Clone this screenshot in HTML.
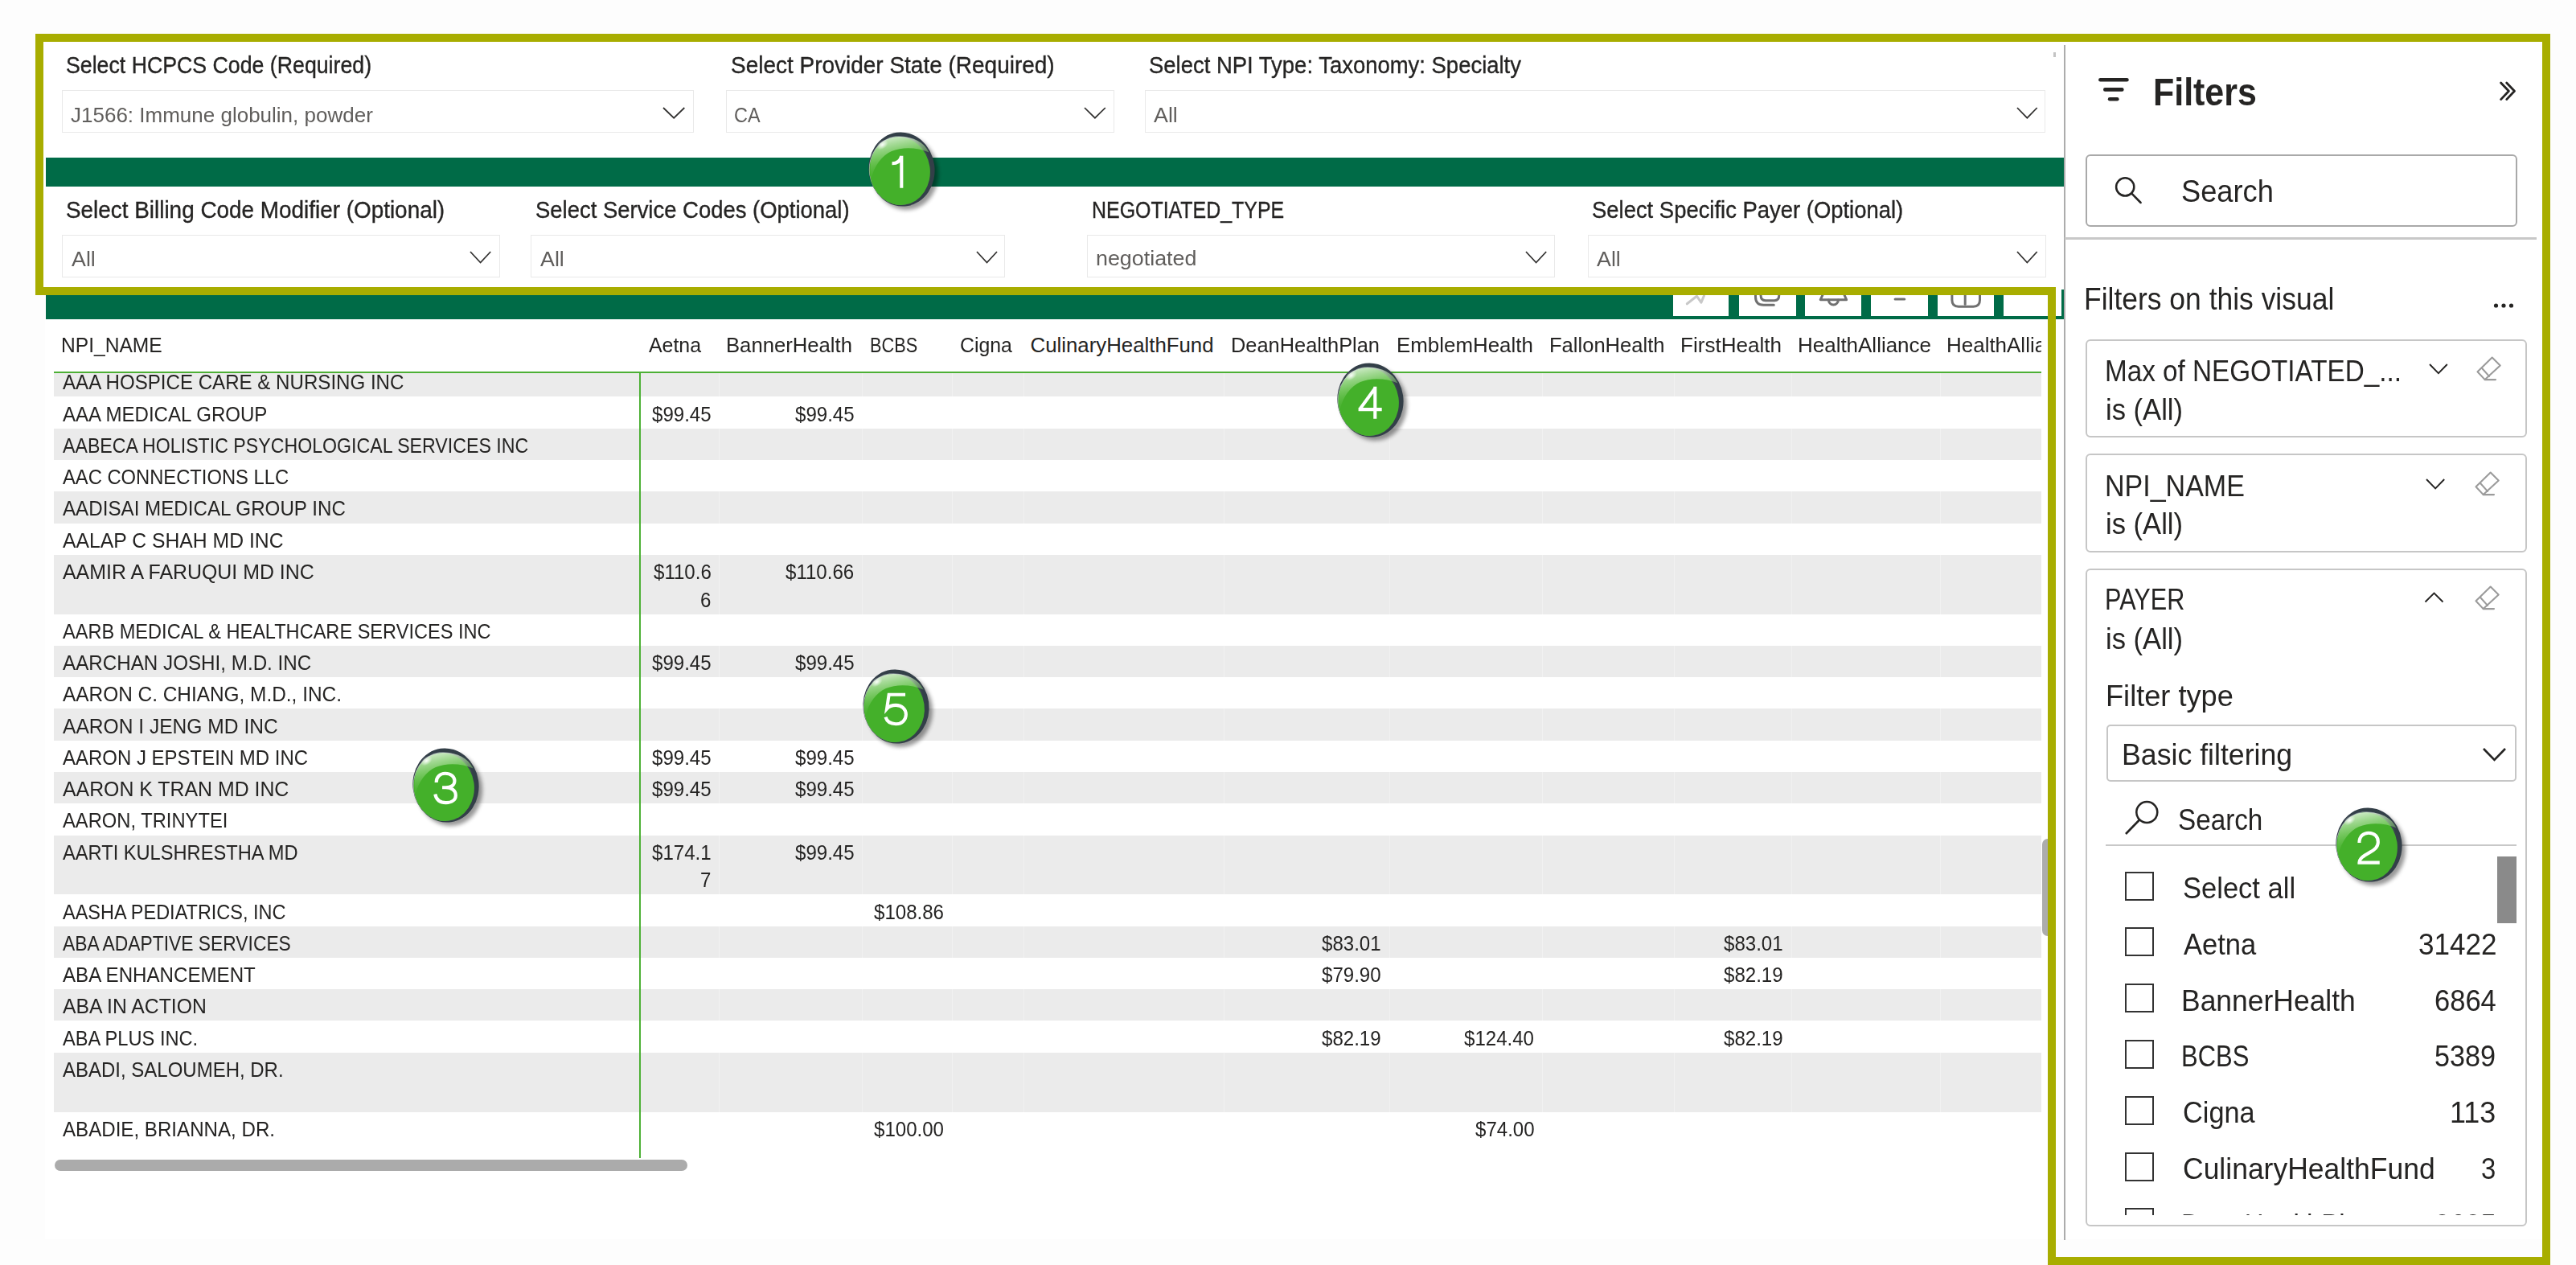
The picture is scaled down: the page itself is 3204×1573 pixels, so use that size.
<!DOCTYPE html>
<html><head><meta charset="utf-8"><style>
html,body{margin:0;padding:0;}
body{width:3204px;height:1573px;overflow:hidden;background:#fdfdfd;font-family:"Liberation Sans", sans-serif;}
#r{position:relative;width:3204px;height:1573px;overflow:hidden;color:#252423;}
#r div,#r svg{position:absolute;white-space:nowrap;}
</style></head><body><div id="r">
<div style="left:56.00px;top:52.00px;width:3106.00px;height:1489.00px;background:#fff"></div>
<div style="left:54.00px;top:52.00px;width:2.00px;height:315.00px;background:#fff"></div>
<div style="left:57.00px;top:196.20px;width:2509.50px;height:35.40px;background:#006b47"></div>
<div style="left:57.00px;top:360.00px;width:2509.50px;height:36.50px;background:#006b47"></div>
<div style="left:2081.00px;top:360.00px;width:69.30px;height:32.70px;background:#fff"></div>
<div style="left:2163.00px;top:360.00px;width:70.50px;height:32.70px;background:#fff"></div>
<div style="left:2245.10px;top:360.00px;width:70.40px;height:32.70px;background:#fff"></div>
<div style="left:2327.00px;top:360.00px;width:70.80px;height:32.70px;background:#fff"></div>
<div style="left:2410.10px;top:360.00px;width:69.90px;height:32.70px;background:#fff"></div>
<div style="left:2492.40px;top:360.00px;width:71.30px;height:32.70px;background:#fff"></div>
<svg style="left:2080px;top:350px" width="490" height="45"><g fill="none" stroke-linecap="round" stroke-linejoin="round"><polyline points="18.3,27.8 30.4,18.2 35.9,26.2 39.5,17.7" stroke="#c8c8c8" stroke-width="3"/><path d="M103.5,10 L103.5,19 Q103.5,29.3 113.5,29.3 L126.3,29.3" stroke="#707070" stroke-width="3"/><path d="M110,10 L110,17 Q110,23.7 116,23.7 L127,23.7 Q132.8,23.7 132.8,17 L132.8,10" stroke="#707070" stroke-width="3"/><path d="M190,10 L184.3,22.7 L216.6,22.7 L211,10" stroke="#707070" stroke-width="3"/><path d="M194.4,23 A6,6 0 0 0 206.4,23" stroke="#707070" stroke-width="3"/><line x1="277.2" y1="22" x2="288.7" y2="22" stroke="#707070" stroke-width="3.2"/><path d="M347.9,10 L347.9,23 Q347.9,31.2 356,31.2 L374.5,31.2 Q382.5,31.2 382.5,23 L382.5,10" stroke="#707070" stroke-width="3"/><line x1="364.2" y1="10" x2="364.2" y2="28.3" stroke="#707070" stroke-width="3"/></g></svg>
<div style="left:82.49px;top:66.00px;font-size:29.4px;line-height:29.4px;transform:scaleX(0.9088);transform-origin:0 0;-webkit-text-stroke:0.35px #252423;">Select HCPCS Code (Required)</div>
<div style="left:76.60px;top:112.30px;width:786.00px;height:53.10px;border:1.6px solid #e9e9e9;box-sizing:border-box;background:#fff"></div>
<div style="left:87.70px;top:131.00px;font-size:25.8px;line-height:25.8px;color:#605e5c;transform:scaleX(1.0079);transform-origin:0 0;">J1566: Immune globulin, powder</div>
<svg style="left:822.00px;top:131.00px" width="32.30" height="18.70"><polyline points="3,3 16.15,15.70 29.30,3" fill="none" stroke="#323130" stroke-width="1.75"/></svg>
<div style="left:908.65px;top:66.00px;font-size:29.4px;line-height:29.4px;transform:scaleX(0.9517);transform-origin:0 0;-webkit-text-stroke:0.35px #252423;">Select Provider State (Required)</div>
<div style="left:902.80px;top:112.30px;width:482.90px;height:52.90px;border:1.6px solid #e9e9e9;box-sizing:border-box;background:#fff"></div>
<div style="left:913.29px;top:131.00px;font-size:25.8px;line-height:25.8px;color:#605e5c;transform:scaleX(0.9094);transform-origin:0 0;">CA</div>
<svg style="left:1346.00px;top:131.00px" width="31.80" height="18.70"><polyline points="3,3 15.90,15.70 28.80,3" fill="none" stroke="#323130" stroke-width="1.75"/></svg>
<div style="left:1429.17px;top:66.00px;font-size:29.4px;line-height:29.4px;transform:scaleX(0.9343);transform-origin:0 0;-webkit-text-stroke:0.35px #252423;">Select NPI Type: Taxonomy: Specialty</div>
<div style="left:1424.00px;top:112.30px;width:1120.30px;height:53.10px;border:1.6px solid #e9e9e9;box-sizing:border-box;background:#fff"></div>
<div style="left:1435.40px;top:131.00px;font-size:25.8px;line-height:25.8px;color:#605e5c;transform:scaleX(1.0394);transform-origin:0 0;">All</div>
<svg style="left:2506.30px;top:131.00px" width="30.70" height="18.70"><polyline points="3,3 15.35,15.70 27.70,3" fill="none" stroke="#323130" stroke-width="1.75"/></svg>
<div style="left:81.75px;top:246.00px;font-size:29.4px;line-height:29.4px;transform:scaleX(0.9487);transform-origin:0 0;-webkit-text-stroke:0.35px #252423;">Select Billing Code Modifier (Optional)</div>
<div style="left:76.50px;top:292.20px;width:545.80px;height:52.80px;border:1.6px solid #e9e9e9;box-sizing:border-box;background:#fff"></div>
<div style="left:88.50px;top:310.00px;font-size:25.8px;line-height:25.8px;color:#605e5c;transform:scaleX(1.0394);transform-origin:0 0;">All</div>
<svg style="left:582.40px;top:309.50px" width="31.20" height="19.50"><polyline points="3,3 15.60,16.50 28.20,3" fill="none" stroke="#323130" stroke-width="1.75"/></svg>
<div style="left:666.07px;top:246.00px;font-size:29.4px;line-height:29.4px;transform:scaleX(0.9340);transform-origin:0 0;-webkit-text-stroke:0.35px #252423;">Select Service Codes (Optional)</div>
<div style="left:660.00px;top:292.20px;width:590.00px;height:52.80px;border:1.6px solid #e9e9e9;box-sizing:border-box;background:#fff"></div>
<div style="left:671.50px;top:310.00px;font-size:25.8px;line-height:25.8px;color:#605e5c;transform:scaleX(1.0394);transform-origin:0 0;">All</div>
<svg style="left:1211.50px;top:309.50px" width="31.00" height="19.50"><polyline points="3,3 15.50,16.50 28.00,3" fill="none" stroke="#323130" stroke-width="1.75"/></svg>
<div style="left:1357.50px;top:246.00px;font-size:29.4px;line-height:29.4px;transform:scaleX(0.8483);transform-origin:0 0;-webkit-text-stroke:0.35px #252423;">NEGOTIATED_TYPE</div>
<div style="left:1351.60px;top:292.20px;width:582.40px;height:53.20px;border:1.6px solid #e9e9e9;box-sizing:border-box;background:#fff"></div>
<div style="left:1362.86px;top:309.00px;font-size:25.8px;line-height:25.8px;color:#605e5c;transform:scaleX(1.0411);transform-origin:0 0;">negotiated</div>
<svg style="left:1894.80px;top:309.50px" width="31.20" height="19.50"><polyline points="3,3 15.60,16.50 28.20,3" fill="none" stroke="#323130" stroke-width="1.75"/></svg>
<div style="left:1979.87px;top:246.00px;font-size:29.4px;line-height:29.4px;transform:scaleX(0.9332);transform-origin:0 0;-webkit-text-stroke:0.35px #252423;">Select Specific Payer (Optional)</div>
<div style="left:1974.50px;top:292.40px;width:570.90px;height:52.60px;border:1.6px solid #e9e9e9;box-sizing:border-box;background:#fff"></div>
<div style="left:1986.30px;top:310.00px;font-size:25.8px;line-height:25.8px;color:#605e5c;transform:scaleX(1.0394);transform-origin:0 0;">All</div>
<svg style="left:2506.30px;top:309.50px" width="30.70" height="19.50"><polyline points="3,3 15.35,16.50 27.70,3" fill="none" stroke="#323130" stroke-width="1.75"/></svg>
<div style="left:67.20px;top:400px;width:2471.80px;height:62px;overflow:hidden">
<div style="left:8.59px;top:17.00px;font-size:25.8px;line-height:25.8px;transform:scaleX(0.9532);transform-origin:0 0;">NPI_NAME</div>
<div style="left:739.40px;top:17.00px;font-size:25.8px;line-height:25.8px;transform:scaleX(0.9652);transform-origin:0 0;">Aetna</div>
<div style="left:835.81px;top:17.00px;font-size:25.8px;line-height:25.8px;transform:scaleX(0.9948);transform-origin:0 0;">BannerHealth</div>
<div style="left:1014.82px;top:17.00px;font-size:25.8px;line-height:25.8px;transform:scaleX(0.8421);transform-origin:0 0;">BCBS</div>
<div style="left:1126.64px;top:17.00px;font-size:25.8px;line-height:25.8px;transform:scaleX(0.9619);transform-origin:0 0;">Cigna</div>
<div style="left:1214.40px;top:17.00px;font-size:25.8px;line-height:25.8px;">CulinaryHealthFund</div>
<div style="left:1463.43px;top:17.00px;font-size:25.8px;line-height:25.8px;transform:scaleX(0.9847);transform-origin:0 0;">DeanHealthPlan</div>
<div style="left:1669.59px;top:17.00px;font-size:25.8px;line-height:25.8px;transform:scaleX(1.0040);transform-origin:0 0;">EmblemHealth</div>
<div style="left:1860.12px;top:17.00px;font-size:25.8px;line-height:25.8px;transform:scaleX(0.9909);transform-origin:0 0;">FallonHealth</div>
<div style="left:2023.18px;top:17.00px;font-size:25.8px;line-height:25.8px;transform:scaleX(1.0102);transform-origin:0 0;">FirstHealth</div>
<div style="left:2168.79px;top:17.00px;font-size:25.8px;line-height:25.8px;transform:scaleX(1.0064);transform-origin:0 0;">HealthAlliance</div>
<div style="left:2353.79px;top:17.00px;font-size:25.8px;line-height:25.8px;transform:scaleX(1.0064);transform-origin:0 0;">HealthAlliance</div>
</div>
<div style="left:67.20px;top:463.60px;width:2471.80px;height:976.40px;overflow:hidden">
<div style="left:0.00px;top:-9.36px;width:2471.80px;height:39.26px;background:#ebebeb"></div>
<div style="left:827.30px;top:-9.36px;width:1.00px;height:39.26px;background:#f1f1f1"></div>
<div style="left:1004.80px;top:-9.36px;width:1.00px;height:39.26px;background:#f1f1f1"></div>
<div style="left:1116.80px;top:-9.36px;width:1.00px;height:39.26px;background:#f1f1f1"></div>
<div style="left:1206.30px;top:-9.36px;width:1.00px;height:39.26px;background:#f1f1f1"></div>
<div style="left:1454.40px;top:-9.36px;width:1.00px;height:39.26px;background:#f1f1f1"></div>
<div style="left:1660.60px;top:-9.36px;width:1.00px;height:39.26px;background:#f1f1f1"></div>
<div style="left:1850.80px;top:-9.36px;width:1.00px;height:39.26px;background:#f1f1f1"></div>
<div style="left:2015.00px;top:-9.36px;width:1.00px;height:39.26px;background:#f1f1f1"></div>
<div style="left:2160.40px;top:-9.36px;width:1.00px;height:39.26px;background:#f1f1f1"></div>
<div style="left:2345.60px;top:-9.36px;width:1.00px;height:39.26px;background:#f1f1f1"></div>
<div style="left:10.40px;top:-2.00px;font-size:26.3px;line-height:26.3px;transform:scaleX(0.9162);transform-origin:0 0;">AAA HOSPICE CARE &amp; NURSING INC</div>
<div style="left:10.40px;top:38.00px;font-size:26.3px;line-height:26.3px;transform:scaleX(0.9146);transform-origin:0 0;">AAA MEDICAL GROUP</div>
<div style="left:743.98px;top:38.00px;font-size:26.3px;line-height:26.3px;transform:scaleX(0.9150);transform-origin:0 0;">$99.45</div>
<div style="left:921.48px;top:38.00px;font-size:26.3px;line-height:26.3px;transform:scaleX(0.9150);transform-origin:0 0;">$99.45</div>
<div style="left:0.00px;top:69.16px;width:2471.80px;height:39.26px;background:#ebebeb"></div>
<div style="left:827.30px;top:69.16px;width:1.00px;height:39.26px;background:#f1f1f1"></div>
<div style="left:1004.80px;top:69.16px;width:1.00px;height:39.26px;background:#f1f1f1"></div>
<div style="left:1116.80px;top:69.16px;width:1.00px;height:39.26px;background:#f1f1f1"></div>
<div style="left:1206.30px;top:69.16px;width:1.00px;height:39.26px;background:#f1f1f1"></div>
<div style="left:1454.40px;top:69.16px;width:1.00px;height:39.26px;background:#f1f1f1"></div>
<div style="left:1660.60px;top:69.16px;width:1.00px;height:39.26px;background:#f1f1f1"></div>
<div style="left:1850.80px;top:69.16px;width:1.00px;height:39.26px;background:#f1f1f1"></div>
<div style="left:2015.00px;top:69.16px;width:1.00px;height:39.26px;background:#f1f1f1"></div>
<div style="left:2160.40px;top:69.16px;width:1.00px;height:39.26px;background:#f1f1f1"></div>
<div style="left:2345.60px;top:69.16px;width:1.00px;height:39.26px;background:#f1f1f1"></div>
<div style="left:10.40px;top:77.00px;font-size:26.3px;line-height:26.3px;transform:scaleX(0.8807);transform-origin:0 0;">AABECA HOLISTIC PSYCHOLOGICAL SERVICES INC</div>
<div style="left:10.40px;top:116.00px;font-size:26.3px;line-height:26.3px;transform:scaleX(0.9032);transform-origin:0 0;">AAC CONNECTIONS LLC</div>
<div style="left:0.00px;top:147.68px;width:2471.80px;height:39.26px;background:#ebebeb"></div>
<div style="left:827.30px;top:147.68px;width:1.00px;height:39.26px;background:#f1f1f1"></div>
<div style="left:1004.80px;top:147.68px;width:1.00px;height:39.26px;background:#f1f1f1"></div>
<div style="left:1116.80px;top:147.68px;width:1.00px;height:39.26px;background:#f1f1f1"></div>
<div style="left:1206.30px;top:147.68px;width:1.00px;height:39.26px;background:#f1f1f1"></div>
<div style="left:1454.40px;top:147.68px;width:1.00px;height:39.26px;background:#f1f1f1"></div>
<div style="left:1660.60px;top:147.68px;width:1.00px;height:39.26px;background:#f1f1f1"></div>
<div style="left:1850.80px;top:147.68px;width:1.00px;height:39.26px;background:#f1f1f1"></div>
<div style="left:2015.00px;top:147.68px;width:1.00px;height:39.26px;background:#f1f1f1"></div>
<div style="left:2160.40px;top:147.68px;width:1.00px;height:39.26px;background:#f1f1f1"></div>
<div style="left:2345.60px;top:147.68px;width:1.00px;height:39.26px;background:#f1f1f1"></div>
<div style="left:10.40px;top:155.00px;font-size:26.3px;line-height:26.3px;transform:scaleX(0.9191);transform-origin:0 0;">AADISAI MEDICAL GROUP INC</div>
<div style="left:10.40px;top:195.00px;font-size:26.3px;line-height:26.3px;transform:scaleX(0.9408);transform-origin:0 0;">AALAP C SHAH MD INC</div>
<div style="left:0.00px;top:226.20px;width:2471.80px;height:73.92px;background:#ebebeb"></div>
<div style="left:827.30px;top:226.20px;width:1.00px;height:73.92px;background:#f1f1f1"></div>
<div style="left:1004.80px;top:226.20px;width:1.00px;height:73.92px;background:#f1f1f1"></div>
<div style="left:1116.80px;top:226.20px;width:1.00px;height:73.92px;background:#f1f1f1"></div>
<div style="left:1206.30px;top:226.20px;width:1.00px;height:73.92px;background:#f1f1f1"></div>
<div style="left:1454.40px;top:226.20px;width:1.00px;height:73.92px;background:#f1f1f1"></div>
<div style="left:1660.60px;top:226.20px;width:1.00px;height:73.92px;background:#f1f1f1"></div>
<div style="left:1850.80px;top:226.20px;width:1.00px;height:73.92px;background:#f1f1f1"></div>
<div style="left:2015.00px;top:226.20px;width:1.00px;height:73.92px;background:#f1f1f1"></div>
<div style="left:2160.40px;top:226.20px;width:1.00px;height:73.92px;background:#f1f1f1"></div>
<div style="left:2345.60px;top:226.20px;width:1.00px;height:73.92px;background:#f1f1f1"></div>
<div style="left:10.40px;top:234.00px;font-size:26.3px;line-height:26.3px;transform:scaleX(0.9469);transform-origin:0 0;">AAMIR A FARUQUI MD INC</div>
<div style="left:745.76px;top:234.00px;font-size:26.3px;line-height:26.3px;transform:scaleX(0.9150);transform-origin:0 0;">$110.6</div>
<div style="left:804.19px;top:269.00px;font-size:26.3px;line-height:26.3px;transform:scaleX(0.9150);transform-origin:0 0;">6</div>
<div style="left:909.88px;top:234.00px;font-size:26.3px;line-height:26.3px;transform:scaleX(0.9150);transform-origin:0 0;">$110.66</div>
<div style="left:10.40px;top:308.00px;font-size:26.3px;line-height:26.3px;transform:scaleX(0.8961);transform-origin:0 0;">AARB MEDICAL &amp; HEALTHCARE SERVICES INC</div>
<div style="left:0.00px;top:339.38px;width:2471.80px;height:39.26px;background:#ebebeb"></div>
<div style="left:827.30px;top:339.38px;width:1.00px;height:39.26px;background:#f1f1f1"></div>
<div style="left:1004.80px;top:339.38px;width:1.00px;height:39.26px;background:#f1f1f1"></div>
<div style="left:1116.80px;top:339.38px;width:1.00px;height:39.26px;background:#f1f1f1"></div>
<div style="left:1206.30px;top:339.38px;width:1.00px;height:39.26px;background:#f1f1f1"></div>
<div style="left:1454.40px;top:339.38px;width:1.00px;height:39.26px;background:#f1f1f1"></div>
<div style="left:1660.60px;top:339.38px;width:1.00px;height:39.26px;background:#f1f1f1"></div>
<div style="left:1850.80px;top:339.38px;width:1.00px;height:39.26px;background:#f1f1f1"></div>
<div style="left:2015.00px;top:339.38px;width:1.00px;height:39.26px;background:#f1f1f1"></div>
<div style="left:2160.40px;top:339.38px;width:1.00px;height:39.26px;background:#f1f1f1"></div>
<div style="left:2345.60px;top:339.38px;width:1.00px;height:39.26px;background:#f1f1f1"></div>
<div style="left:10.40px;top:347.00px;font-size:26.3px;line-height:26.3px;transform:scaleX(0.9202);transform-origin:0 0;">AARCHAN JOSHI, M.D. INC</div>
<div style="left:743.98px;top:347.00px;font-size:26.3px;line-height:26.3px;transform:scaleX(0.9150);transform-origin:0 0;">$99.45</div>
<div style="left:921.48px;top:347.00px;font-size:26.3px;line-height:26.3px;transform:scaleX(0.9150);transform-origin:0 0;">$99.45</div>
<div style="left:10.40px;top:386.00px;font-size:26.3px;line-height:26.3px;transform:scaleX(0.9276);transform-origin:0 0;">AARON C. CHIANG, M.D., INC.</div>
<div style="left:0.00px;top:417.90px;width:2471.80px;height:39.26px;background:#ebebeb"></div>
<div style="left:827.30px;top:417.90px;width:1.00px;height:39.26px;background:#f1f1f1"></div>
<div style="left:1004.80px;top:417.90px;width:1.00px;height:39.26px;background:#f1f1f1"></div>
<div style="left:1116.80px;top:417.90px;width:1.00px;height:39.26px;background:#f1f1f1"></div>
<div style="left:1206.30px;top:417.90px;width:1.00px;height:39.26px;background:#f1f1f1"></div>
<div style="left:1454.40px;top:417.90px;width:1.00px;height:39.26px;background:#f1f1f1"></div>
<div style="left:1660.60px;top:417.90px;width:1.00px;height:39.26px;background:#f1f1f1"></div>
<div style="left:1850.80px;top:417.90px;width:1.00px;height:39.26px;background:#f1f1f1"></div>
<div style="left:2015.00px;top:417.90px;width:1.00px;height:39.26px;background:#f1f1f1"></div>
<div style="left:2160.40px;top:417.90px;width:1.00px;height:39.26px;background:#f1f1f1"></div>
<div style="left:2345.60px;top:417.90px;width:1.00px;height:39.26px;background:#f1f1f1"></div>
<div style="left:10.40px;top:426.00px;font-size:26.3px;line-height:26.3px;transform:scaleX(0.9349);transform-origin:0 0;">AARON I JENG MD INC</div>
<div style="left:10.40px;top:465.00px;font-size:26.3px;line-height:26.3px;transform:scaleX(0.9116);transform-origin:0 0;">AARON J EPSTEIN MD INC</div>
<div style="left:743.98px;top:465.00px;font-size:26.3px;line-height:26.3px;transform:scaleX(0.9150);transform-origin:0 0;">$99.45</div>
<div style="left:921.48px;top:465.00px;font-size:26.3px;line-height:26.3px;transform:scaleX(0.9150);transform-origin:0 0;">$99.45</div>
<div style="left:0.00px;top:496.42px;width:2471.80px;height:39.26px;background:#ebebeb"></div>
<div style="left:827.30px;top:496.42px;width:1.00px;height:39.26px;background:#f1f1f1"></div>
<div style="left:1004.80px;top:496.42px;width:1.00px;height:39.26px;background:#f1f1f1"></div>
<div style="left:1116.80px;top:496.42px;width:1.00px;height:39.26px;background:#f1f1f1"></div>
<div style="left:1206.30px;top:496.42px;width:1.00px;height:39.26px;background:#f1f1f1"></div>
<div style="left:1454.40px;top:496.42px;width:1.00px;height:39.26px;background:#f1f1f1"></div>
<div style="left:1660.60px;top:496.42px;width:1.00px;height:39.26px;background:#f1f1f1"></div>
<div style="left:1850.80px;top:496.42px;width:1.00px;height:39.26px;background:#f1f1f1"></div>
<div style="left:2015.00px;top:496.42px;width:1.00px;height:39.26px;background:#f1f1f1"></div>
<div style="left:2160.40px;top:496.42px;width:1.00px;height:39.26px;background:#f1f1f1"></div>
<div style="left:2345.60px;top:496.42px;width:1.00px;height:39.26px;background:#f1f1f1"></div>
<div style="left:10.40px;top:504.00px;font-size:26.3px;line-height:26.3px;transform:scaleX(0.9453);transform-origin:0 0;">AARON K TRAN MD INC</div>
<div style="left:743.98px;top:504.00px;font-size:26.3px;line-height:26.3px;transform:scaleX(0.9150);transform-origin:0 0;">$99.45</div>
<div style="left:921.48px;top:504.00px;font-size:26.3px;line-height:26.3px;transform:scaleX(0.9150);transform-origin:0 0;">$99.45</div>
<div style="left:10.40px;top:543.00px;font-size:26.3px;line-height:26.3px;transform:scaleX(0.9028);transform-origin:0 0;">AARON, TRINYTEI</div>
<div style="left:0.00px;top:574.94px;width:2471.80px;height:73.92px;background:#ebebeb"></div>
<div style="left:827.30px;top:574.94px;width:1.00px;height:73.92px;background:#f1f1f1"></div>
<div style="left:1004.80px;top:574.94px;width:1.00px;height:73.92px;background:#f1f1f1"></div>
<div style="left:1116.80px;top:574.94px;width:1.00px;height:73.92px;background:#f1f1f1"></div>
<div style="left:1206.30px;top:574.94px;width:1.00px;height:73.92px;background:#f1f1f1"></div>
<div style="left:1454.40px;top:574.94px;width:1.00px;height:73.92px;background:#f1f1f1"></div>
<div style="left:1660.60px;top:574.94px;width:1.00px;height:73.92px;background:#f1f1f1"></div>
<div style="left:1850.80px;top:574.94px;width:1.00px;height:73.92px;background:#f1f1f1"></div>
<div style="left:2015.00px;top:574.94px;width:1.00px;height:73.92px;background:#f1f1f1"></div>
<div style="left:2160.40px;top:574.94px;width:1.00px;height:73.92px;background:#f1f1f1"></div>
<div style="left:2345.60px;top:574.94px;width:1.00px;height:73.92px;background:#f1f1f1"></div>
<div style="left:10.40px;top:583.00px;font-size:26.3px;line-height:26.3px;transform:scaleX(0.8992);transform-origin:0 0;">AARTI KULSHRESTHA MD</div>
<div style="left:743.98px;top:583.00px;font-size:26.3px;line-height:26.3px;transform:scaleX(0.9150);transform-origin:0 0;">$174.1</div>
<div style="left:804.19px;top:617.00px;font-size:26.3px;line-height:26.3px;transform:scaleX(0.9150);transform-origin:0 0;">7</div>
<div style="left:921.48px;top:583.00px;font-size:26.3px;line-height:26.3px;transform:scaleX(0.9150);transform-origin:0 0;">$99.45</div>
<div style="left:10.40px;top:657.00px;font-size:26.3px;line-height:26.3px;transform:scaleX(0.8929);transform-origin:0 0;">AASHA PEDIATRICS, INC</div>
<div style="left:1020.10px;top:657.00px;font-size:26.3px;line-height:26.3px;transform:scaleX(0.9150);transform-origin:0 0;">$108.86</div>
<div style="left:0.00px;top:688.12px;width:2471.80px;height:39.26px;background:#ebebeb"></div>
<div style="left:827.30px;top:688.12px;width:1.00px;height:39.26px;background:#f1f1f1"></div>
<div style="left:1004.80px;top:688.12px;width:1.00px;height:39.26px;background:#f1f1f1"></div>
<div style="left:1116.80px;top:688.12px;width:1.00px;height:39.26px;background:#f1f1f1"></div>
<div style="left:1206.30px;top:688.12px;width:1.00px;height:39.26px;background:#f1f1f1"></div>
<div style="left:1454.40px;top:688.12px;width:1.00px;height:39.26px;background:#f1f1f1"></div>
<div style="left:1660.60px;top:688.12px;width:1.00px;height:39.26px;background:#f1f1f1"></div>
<div style="left:1850.80px;top:688.12px;width:1.00px;height:39.26px;background:#f1f1f1"></div>
<div style="left:2015.00px;top:688.12px;width:1.00px;height:39.26px;background:#f1f1f1"></div>
<div style="left:2160.40px;top:688.12px;width:1.00px;height:39.26px;background:#f1f1f1"></div>
<div style="left:2345.60px;top:688.12px;width:1.00px;height:39.26px;background:#f1f1f1"></div>
<div style="left:10.40px;top:696.00px;font-size:26.3px;line-height:26.3px;transform:scaleX(0.8683);transform-origin:0 0;">ABA ADAPTIVE SERVICES</div>
<div style="left:1577.28px;top:696.00px;font-size:26.3px;line-height:26.3px;transform:scaleX(0.9150);transform-origin:0 0;">$83.01</div>
<div style="left:2077.08px;top:696.00px;font-size:26.3px;line-height:26.3px;transform:scaleX(0.9150);transform-origin:0 0;">$83.01</div>
<div style="left:10.40px;top:735.00px;font-size:26.3px;line-height:26.3px;transform:scaleX(0.9169);transform-origin:0 0;">ABA ENHANCEMENT</div>
<div style="left:1577.28px;top:735.00px;font-size:26.3px;line-height:26.3px;transform:scaleX(0.9150);transform-origin:0 0;">$79.90</div>
<div style="left:2077.08px;top:735.00px;font-size:26.3px;line-height:26.3px;transform:scaleX(0.9150);transform-origin:0 0;">$82.19</div>
<div style="left:0.00px;top:766.64px;width:2471.80px;height:39.26px;background:#ebebeb"></div>
<div style="left:827.30px;top:766.64px;width:1.00px;height:39.26px;background:#f1f1f1"></div>
<div style="left:1004.80px;top:766.64px;width:1.00px;height:39.26px;background:#f1f1f1"></div>
<div style="left:1116.80px;top:766.64px;width:1.00px;height:39.26px;background:#f1f1f1"></div>
<div style="left:1206.30px;top:766.64px;width:1.00px;height:39.26px;background:#f1f1f1"></div>
<div style="left:1454.40px;top:766.64px;width:1.00px;height:39.26px;background:#f1f1f1"></div>
<div style="left:1660.60px;top:766.64px;width:1.00px;height:39.26px;background:#f1f1f1"></div>
<div style="left:1850.80px;top:766.64px;width:1.00px;height:39.26px;background:#f1f1f1"></div>
<div style="left:2015.00px;top:766.64px;width:1.00px;height:39.26px;background:#f1f1f1"></div>
<div style="left:2160.40px;top:766.64px;width:1.00px;height:39.26px;background:#f1f1f1"></div>
<div style="left:2345.60px;top:766.64px;width:1.00px;height:39.26px;background:#f1f1f1"></div>
<div style="left:10.40px;top:774.00px;font-size:26.3px;line-height:26.3px;transform:scaleX(0.9409);transform-origin:0 0;">ABA IN ACTION</div>
<div style="left:10.40px;top:814.00px;font-size:26.3px;line-height:26.3px;transform:scaleX(0.8990);transform-origin:0 0;">ABA PLUS INC.</div>
<div style="left:1577.28px;top:814.00px;font-size:26.3px;line-height:26.3px;transform:scaleX(0.9150);transform-origin:0 0;">$82.19</div>
<div style="left:1754.10px;top:814.00px;font-size:26.3px;line-height:26.3px;transform:scaleX(0.9150);transform-origin:0 0;">$124.40</div>
<div style="left:2077.08px;top:814.00px;font-size:26.3px;line-height:26.3px;transform:scaleX(0.9150);transform-origin:0 0;">$82.19</div>
<div style="left:0.00px;top:845.16px;width:2471.80px;height:73.92px;background:#ebebeb"></div>
<div style="left:827.30px;top:845.16px;width:1.00px;height:73.92px;background:#f1f1f1"></div>
<div style="left:1004.80px;top:845.16px;width:1.00px;height:73.92px;background:#f1f1f1"></div>
<div style="left:1116.80px;top:845.16px;width:1.00px;height:73.92px;background:#f1f1f1"></div>
<div style="left:1206.30px;top:845.16px;width:1.00px;height:73.92px;background:#f1f1f1"></div>
<div style="left:1454.40px;top:845.16px;width:1.00px;height:73.92px;background:#f1f1f1"></div>
<div style="left:1660.60px;top:845.16px;width:1.00px;height:73.92px;background:#f1f1f1"></div>
<div style="left:1850.80px;top:845.16px;width:1.00px;height:73.92px;background:#f1f1f1"></div>
<div style="left:2015.00px;top:845.16px;width:1.00px;height:73.92px;background:#f1f1f1"></div>
<div style="left:2160.40px;top:845.16px;width:1.00px;height:73.92px;background:#f1f1f1"></div>
<div style="left:2345.60px;top:845.16px;width:1.00px;height:73.92px;background:#f1f1f1"></div>
<div style="left:10.40px;top:853.00px;font-size:26.3px;line-height:26.3px;transform:scaleX(0.9123);transform-origin:0 0;">ABADI, SALOUMEH, DR.</div>
<div style="left:10.40px;top:927.00px;font-size:26.3px;line-height:26.3px;transform:scaleX(0.9171);transform-origin:0 0;">ABADIE, BRIANNA, DR.</div>
<div style="left:1020.10px;top:927.00px;font-size:26.3px;line-height:26.3px;transform:scaleX(0.9150);transform-origin:0 0;">$100.00</div>
<div style="left:1767.48px;top:927.00px;font-size:26.3px;line-height:26.3px;transform:scaleX(0.9150);transform-origin:0 0;">$74.00</div>
</div>
<div style="left:67.20px;top:461.80px;width:2471.80px;height:1.80px;background:#4db035"></div>
<div style="left:795.20px;top:462.00px;width:2.00px;height:978.00px;background:#4db035"></div>
<div style="left:68.00px;top:1442.20px;width:787.00px;height:13.60px;background:#ababab;border-radius:7px"></div>
<div style="left:2540.00px;top:1042.70px;width:14.00px;height:120.90px;background:#acacac;border-radius:7px"></div>
<div style="left:2566.80px;top:56.00px;width:2.20px;height:1486.00px;background:#acacac"></div>
<div style="left:2563.70px;top:363.00px;width:2.60px;height:33.50px;background:#006b47"></div>
<svg style="left:2600px;top:85px" width="60" height="50"><g stroke="#252423" stroke-width="4.6" stroke-linecap="round"><line x1="12.4" y1="14.3" x2="45.4" y2="14.3"/><line x1="18.3" y1="26.4" x2="39.3" y2="26.4"/><line x1="24.1" y1="38.3" x2="33.3" y2="38.3"/></g></svg>
<div style="left:2677.89px;top:91.00px;font-size:47.6px;line-height:47.6px;font-weight:700;transform:scaleX(0.9020);transform-origin:0 0;">Filters</div>
<svg style="left:3100px;top:95px" width="40" height="40"><g fill="none" stroke="#252423" stroke-width="2.8" stroke-linecap="round" stroke-linejoin="round"><polyline points="10.6,8 20.4,18.3 10.6,28.6"/><polyline points="17.7,8 27.5,18.3 17.7,28.6"/></g></svg>
<div style="left:2554.20px;top:65.30px;width:3.10px;height:5.30px;background:#c4c4c4"></div>
<div style="left:2593.60px;top:192.40px;width:537.90px;height:89.40px;border:2.4px solid #a9a9a9;border-radius:6px;box-sizing:border-box"></div>
<svg style="left:2620px;top:210px" width="60" height="50"><g fill="none" stroke="#252423" stroke-width="2.5" stroke-linecap="round"><circle cx="23.2" cy="22.4" r="11.1"/><line x1="31.4" y1="30.6" x2="42.6" y2="42"/></g></svg>
<div style="left:2712.98px;top:218.00px;font-size:39.5px;line-height:39.5px;transform:scaleX(0.9183);transform-origin:0 0;">Search</div>
<div style="left:2568.00px;top:295.00px;width:587.00px;height:2.50px;background:#c8c8c8"></div>
<div style="left:2591.70px;top:353.00px;font-size:38px;line-height:38px;transform:scaleX(0.9329);transform-origin:0 0;">Filters on this visual</div>
<svg style="left:3098px;top:372px" width="34" height="14"><g fill="#252423"><circle cx="6.5" cy="8" r="2.6"/><circle cx="16" cy="8" r="2.6"/><circle cx="25.5" cy="8" r="2.6"/></g></svg>
<div style="left:2593.60px;top:421.50px;width:549.40px;height:122.50px;border:2.4px solid #c6c6c6;border-radius:6px;box-sizing:border-box"></div>
<div style="left:2618.14px;top:443.00px;font-size:37.5px;line-height:37.5px;transform:scaleX(0.8869);transform-origin:0 0;">Max of NEGOTIATED_...</div>
<div style="left:2618.96px;top:491.00px;font-size:37.5px;line-height:37.5px;transform:scaleX(0.9219);transform-origin:0 0;">is (All)</div>
<svg style="left:3019.40px;top:450.40px" width="27.80" height="17.10"><polyline points="3,3 13.90,14.10 24.80,3" fill="none" stroke="#252423" stroke-width="1.9"/></svg>
<svg style="left:3075.00px;top:438.00px" width="42" height="42"><g fill="none" stroke="#9b9b9b" stroke-width="2.1" stroke-linejoin="round" stroke-linecap="round"><path d="M24.7,6.6 L34.7,16.4 L15.7,34.1 L6.5,24.3 Z"/><line x1="11.9" y1="19.8" x2="21" y2="29.9"/><line x1="15.7" y1="34.1" x2="29" y2="34.1"/></g></svg>
<div style="left:2593.60px;top:564.00px;width:549.40px;height:122.80px;border:2.4px solid #c6c6c6;border-radius:6px;box-sizing:border-box"></div>
<div style="left:2618.08px;top:586.00px;font-size:37.5px;line-height:37.5px;transform:scaleX(0.9068);transform-origin:0 0;">NPI_NAME</div>
<div style="left:2618.96px;top:633.00px;font-size:37.5px;line-height:37.5px;transform:scaleX(0.9219);transform-origin:0 0;">is (All)</div>
<svg style="left:3014.50px;top:592.50px" width="28.20" height="17.50"><polyline points="3,3 14.10,14.50 25.20,3" fill="none" stroke="#252423" stroke-width="1.9"/></svg>
<svg style="left:3073.00px;top:580.50px" width="42" height="42"><g fill="none" stroke="#9b9b9b" stroke-width="2.1" stroke-linejoin="round" stroke-linecap="round"><path d="M24.7,6.6 L34.7,16.4 L15.7,34.1 L6.5,24.3 Z"/><line x1="11.9" y1="19.8" x2="21" y2="29.9"/><line x1="15.7" y1="34.1" x2="29" y2="34.1"/></g></svg>
<div style="left:2593.60px;top:707.00px;width:549.40px;height:817.80px;border:2.4px solid #c6c6c6;border-radius:6px;box-sizing:border-box"></div>
<div style="left:2618.25px;top:727.00px;font-size:37.5px;line-height:37.5px;transform:scaleX(0.8163);transform-origin:0 0;">PAYER</div>
<div style="left:2618.86px;top:776.00px;font-size:37.5px;line-height:37.5px;transform:scaleX(0.9219);transform-origin:0 0;">is (All)</div>
<svg style="left:3014px;top:734px" width="28" height="18"><polyline points="2.5,14.5 13.5,3.5 24.5,14.5" fill="none" stroke="#252423" stroke-width="1.9"/></svg>
<svg style="left:3073.00px;top:723.00px" width="42" height="42"><g fill="none" stroke="#9b9b9b" stroke-width="2.1" stroke-linejoin="round" stroke-linecap="round"><path d="M24.7,6.6 L34.7,16.4 L15.7,34.1 L6.5,24.3 Z"/><line x1="11.9" y1="19.8" x2="21" y2="29.9"/><line x1="15.7" y1="34.1" x2="29" y2="34.1"/></g></svg>
<div style="left:2619.01px;top:847.00px;font-size:37.5px;line-height:37.5px;transform:scaleX(0.9647);transform-origin:0 0;">Filter type</div>
<div style="left:2619.50px;top:900.60px;width:510.00px;height:71.40px;border:2.4px solid #c6c6c6;border-radius:5px;box-sizing:border-box"></div>
<div style="left:2638.85px;top:920.00px;font-size:37.5px;line-height:37.5px;transform:scaleX(0.9512);transform-origin:0 0;">Basic filtering</div>
<svg style="left:3085.50px;top:927.50px" width="33.00" height="20.00"><polyline points="3,3 16.50,17.00 30.00,3" fill="none" stroke="#252423" stroke-width="2.6"/></svg>
<svg style="left:2636px;top:990px" width="56" height="56"><g fill="none" stroke="#252423" stroke-width="2.6"><circle cx="34.3" cy="20" r="13"/><line x1="25" y1="29.5" x2="8" y2="47"/></g></svg>
<div style="left:2709.11px;top:1001.00px;font-size:37.5px;line-height:37.5px;transform:scaleX(0.8865);transform-origin:0 0;">Search</div>
<div style="left:2619.00px;top:1049.50px;width:511.00px;height:2.50px;background:#c8c8c8"></div>
<div style="left:2600px;top:1055px;width:540px;height:455.7px;overflow:hidden">
<div style="left:43.00px;top:28.50px;width:36.00px;height:36.00px;border:2.6px solid #333;box-sizing:border-box"></div>
<div style="left:114.68px;top:31.00px;font-size:37.5px;line-height:37.5px;transform:scaleX(0.9205);transform-origin:0 0;">Select all</div>
<div style="left:43.00px;top:98.30px;width:36.00px;height:36.00px;border:2.6px solid #333;box-sizing:border-box"></div>
<div style="left:115.60px;top:101.00px;font-size:37.5px;line-height:37.5px;transform:scaleX(0.9211);transform-origin:0 0;">Aetna</div>
<div style="left:407.97px;top:101.00px;font-size:37.5px;line-height:37.5px;transform:scaleX(0.9347);transform-origin:0 0;">31422</div>
<div style="left:43.00px;top:168.10px;width:36.00px;height:36.00px;border:2.6px solid #333;box-sizing:border-box"></div>
<div style="left:112.76px;top:171.00px;font-size:37.5px;line-height:37.5px;transform:scaleX(0.9454);transform-origin:0 0;">BannerHealth</div>
<div style="left:427.68px;top:171.00px;font-size:37.5px;line-height:37.5px;transform:scaleX(0.9207);transform-origin:0 0;">6864</div>
<div style="left:43.00px;top:237.90px;width:36.00px;height:36.00px;border:2.6px solid #333;box-sizing:border-box"></div>
<div style="left:113.12px;top:240.00px;font-size:37.5px;line-height:37.5px;transform:scaleX(0.8256);transform-origin:0 0;">BCBS</div>
<div style="left:428.49px;top:240.00px;font-size:37.5px;line-height:37.5px;transform:scaleX(0.9109);transform-origin:0 0;">5389</div>
<div style="left:43.00px;top:307.70px;width:36.00px;height:36.00px;border:2.6px solid #333;box-sizing:border-box"></div>
<div style="left:114.68px;top:310.00px;font-size:37.5px;line-height:37.5px;transform:scaleX(0.9153);transform-origin:0 0;">Cigna</div>
<div style="left:447.29px;top:310.00px;font-size:37.5px;line-height:37.5px;transform:scaleX(0.9573);transform-origin:0 0;">113</div>
<div style="left:43.00px;top:377.50px;width:36.00px;height:36.00px;border:2.6px solid #333;box-sizing:border-box"></div>
<div style="left:114.65px;top:380.00px;font-size:37.5px;line-height:37.5px;transform:scaleX(0.9465);transform-origin:0 0;">CulinaryHealthFund</div>
<div style="left:486.23px;top:380.00px;font-size:37.5px;line-height:37.5px;transform:scaleX(0.8737);transform-origin:0 0;">3</div>
<div style="left:43.00px;top:447.30px;width:36.00px;height:36.00px;border:2.6px solid #333;box-sizing:border-box"></div>
<div style="left:112.96px;top:450.00px;font-size:37.5px;line-height:37.5px;transform:scaleX(0.8798);transform-origin:0 0;">DeanHealthPlan</div>
<div style="left:427.78px;top:450.00px;font-size:37.5px;line-height:37.5px;transform:scaleX(0.9195);transform-origin:0 0;">3685</div>
</div>
<div style="left:3105.70px;top:1064.50px;width:23.90px;height:83.00px;background:#8a8a8a"></div>
<div style="left:44.00px;top:42.00px;width:3128.00px;height:10.00px;background:#a8ad00"></div>
<div style="left:44.00px;top:42.00px;width:10.00px;height:325.00px;background:#a8ad00"></div>
<div style="left:44.00px;top:357.00px;width:2513.00px;height:10.00px;background:#a8ad00"></div>
<div style="left:2547.00px;top:357.00px;width:10.00px;height:1216.00px;background:#a8ad00"></div>
<div style="left:3162.00px;top:42.00px;width:10.00px;height:1531.00px;background:#a8ad00"></div>
<div style="left:2547.00px;top:1563.00px;width:625.00px;height:10.00px;background:#a8ad00"></div>
<svg style="left:1069.0px;top:154.0px" width="112" height="120" viewBox="0 0 112 120">
<defs><linearGradient id="hl1" x1="0.25" y1="0" x2="0.55" y2="1"><stop offset="0" stop-color="#ffffff" stop-opacity="0.8"/><stop offset="0.45" stop-color="#9ad886" stop-opacity="0.55"/><stop offset="1" stop-color="#44b02a" stop-opacity="0"/></linearGradient>
<linearGradient id="rim1" x1="0" y1="0" x2="1" y2="0.4"><stop offset="0" stop-color="#c9cfd1"/><stop offset="0.45" stop-color="#77838a"/><stop offset="1" stop-color="#333f48"/></linearGradient>
<radialGradient id="sp1" cx="0.5" cy="0.5" r="0.5"><stop offset="0" stop-color="#fff" stop-opacity="0.95"/><stop offset="1" stop-color="#fff" stop-opacity="0"/></radialGradient>
<filter id="sh1" x="-30%" y="-30%" width="160%" height="160%"><feGaussianBlur stdDeviation="2.4"/></filter></defs>
<ellipse cx="57" cy="61" rx="41" ry="46" fill="#000" opacity="0.4" filter="url(#sh1)" transform="rotate(-8 57 61)"/>
<ellipse cx="52.5" cy="56.5" rx="41" ry="46.2" fill="#333f48" transform="rotate(-8 52.5 56.5)"/>
<ellipse cx="50.6" cy="58" rx="38.6" ry="43.2" fill="url(#rim1)" transform="rotate(-8 50.6 58)"/>
<ellipse cx="50.2" cy="58.6" rx="37.6" ry="42.4" fill="#44b02a" transform="rotate(-8 50.2 58.6)"/>
<path d="M13.5,54 C14,32 28,16.5 49,16 C66,15.5 80,22 86.5,35.5 C72,29 53,28.5 40,34 C28,39.5 19,51 14.5,68 C13.6,63 13.4,58.5 13.5,54 Z" fill="url(#hl1)"/>
<ellipse cx="28.5" cy="26" rx="8" ry="5" fill="url(#sp1)" transform="rotate(-35 28.5 26)"/>
<path d="M1.2,9.6 C7.5,9.6 11.6,6.2 12.9,0.6 M13,0 L13,40" transform="translate(39.30 39.70)" fill="none" stroke="#fff" stroke-width="4.1" stroke-linejoin="miter" stroke-linecap="butt"/>
</svg>
<svg style="left:2894.0px;top:994.0px" width="112" height="120" viewBox="0 0 112 120">
<defs><linearGradient id="hl2" x1="0.25" y1="0" x2="0.55" y2="1"><stop offset="0" stop-color="#ffffff" stop-opacity="0.8"/><stop offset="0.45" stop-color="#9ad886" stop-opacity="0.55"/><stop offset="1" stop-color="#44b02a" stop-opacity="0"/></linearGradient>
<linearGradient id="rim2" x1="0" y1="0" x2="1" y2="0.4"><stop offset="0" stop-color="#c9cfd1"/><stop offset="0.45" stop-color="#77838a"/><stop offset="1" stop-color="#333f48"/></linearGradient>
<radialGradient id="sp2" cx="0.5" cy="0.5" r="0.5"><stop offset="0" stop-color="#fff" stop-opacity="0.95"/><stop offset="1" stop-color="#fff" stop-opacity="0"/></radialGradient>
<filter id="sh2" x="-30%" y="-30%" width="160%" height="160%"><feGaussianBlur stdDeviation="2.4"/></filter></defs>
<ellipse cx="57" cy="61" rx="41" ry="46" fill="#000" opacity="0.4" filter="url(#sh2)" transform="rotate(-8 57 61)"/>
<ellipse cx="52.5" cy="56.5" rx="41" ry="46.2" fill="#333f48" transform="rotate(-8 52.5 56.5)"/>
<ellipse cx="50.6" cy="58" rx="38.6" ry="43.2" fill="url(#rim2)" transform="rotate(-8 50.6 58)"/>
<ellipse cx="50.2" cy="58.6" rx="37.6" ry="42.4" fill="#44b02a" transform="rotate(-8 50.2 58.6)"/>
<path d="M13.5,54 C14,32 28,16.5 49,16 C66,15.5 80,22 86.5,35.5 C72,29 53,28.5 40,34 C28,39.5 19,51 14.5,68 C13.6,63 13.4,58.5 13.5,54 Z" fill="url(#hl2)"/>
<ellipse cx="28.5" cy="26" rx="8" ry="5" fill="url(#sp2)" transform="rotate(-35 28.5 26)"/>
<path d="M2.2,14.2 C2.2,6.3 7.3,2 13.9,2 C21,2 25.6,6.6 25.6,13.3 C25.6,19.6 21.2,22.8 15.3,26.2 C7.6,30.6 2.2,33.6 2.2,38.9 L27.5,38.9" transform="translate(38.25 39.70)" fill="none" stroke="#fff" stroke-width="4.1" stroke-linejoin="miter" stroke-linecap="butt"/>
</svg>
<svg style="left:501.6px;top:920.0px" width="112" height="120" viewBox="0 0 112 120">
<defs><linearGradient id="hl3" x1="0.25" y1="0" x2="0.55" y2="1"><stop offset="0" stop-color="#ffffff" stop-opacity="0.8"/><stop offset="0.45" stop-color="#9ad886" stop-opacity="0.55"/><stop offset="1" stop-color="#44b02a" stop-opacity="0"/></linearGradient>
<linearGradient id="rim3" x1="0" y1="0" x2="1" y2="0.4"><stop offset="0" stop-color="#c9cfd1"/><stop offset="0.45" stop-color="#77838a"/><stop offset="1" stop-color="#333f48"/></linearGradient>
<radialGradient id="sp3" cx="0.5" cy="0.5" r="0.5"><stop offset="0" stop-color="#fff" stop-opacity="0.95"/><stop offset="1" stop-color="#fff" stop-opacity="0"/></radialGradient>
<filter id="sh3" x="-30%" y="-30%" width="160%" height="160%"><feGaussianBlur stdDeviation="2.4"/></filter></defs>
<ellipse cx="57" cy="61" rx="41" ry="46" fill="#000" opacity="0.4" filter="url(#sh3)" transform="rotate(-8 57 61)"/>
<ellipse cx="52.5" cy="56.5" rx="41" ry="46.2" fill="#333f48" transform="rotate(-8 52.5 56.5)"/>
<ellipse cx="50.6" cy="58" rx="38.6" ry="43.2" fill="url(#rim3)" transform="rotate(-8 50.6 58)"/>
<ellipse cx="50.2" cy="58.6" rx="37.6" ry="42.4" fill="#44b02a" transform="rotate(-8 50.2 58.6)"/>
<path d="M13.5,54 C14,32 28,16.5 49,16 C66,15.5 80,22 86.5,35.5 C72,29 53,28.5 40,34 C28,39.5 19,51 14.5,68 C13.6,63 13.4,58.5 13.5,54 Z" fill="url(#hl3)"/>
<ellipse cx="28.5" cy="26" rx="8" ry="5" fill="url(#sp3)" transform="rotate(-35 28.5 26)"/>
<path d="M3,13.2 C3,6.2 7.8,2 14,2 C21,2 25.8,6 25.8,11.4 C25.8,16.8 21.4,19.6 14.6,19.6 L10.4,19.6 M14.6,19.6 C22.2,19.6 27.2,23.4 27.2,29.2 C27.2,35 22.2,38.4 15,38.4 C8,38.4 3,35 1.6,27.8" transform="translate(37.65 39.70)" fill="none" stroke="#fff" stroke-width="4.1" stroke-linejoin="miter" stroke-linecap="butt"/>
</svg>
<svg style="left:1651.8px;top:441.4px" width="112" height="120" viewBox="0 0 112 120">
<defs><linearGradient id="hl4" x1="0.25" y1="0" x2="0.55" y2="1"><stop offset="0" stop-color="#ffffff" stop-opacity="0.8"/><stop offset="0.45" stop-color="#9ad886" stop-opacity="0.55"/><stop offset="1" stop-color="#44b02a" stop-opacity="0"/></linearGradient>
<linearGradient id="rim4" x1="0" y1="0" x2="1" y2="0.4"><stop offset="0" stop-color="#c9cfd1"/><stop offset="0.45" stop-color="#77838a"/><stop offset="1" stop-color="#333f48"/></linearGradient>
<radialGradient id="sp4" cx="0.5" cy="0.5" r="0.5"><stop offset="0" stop-color="#fff" stop-opacity="0.95"/><stop offset="1" stop-color="#fff" stop-opacity="0"/></radialGradient>
<filter id="sh4" x="-30%" y="-30%" width="160%" height="160%"><feGaussianBlur stdDeviation="2.4"/></filter></defs>
<ellipse cx="57" cy="61" rx="41" ry="46" fill="#000" opacity="0.4" filter="url(#sh4)" transform="rotate(-8 57 61)"/>
<ellipse cx="52.5" cy="56.5" rx="41" ry="46.2" fill="#333f48" transform="rotate(-8 52.5 56.5)"/>
<ellipse cx="50.6" cy="58" rx="38.6" ry="43.2" fill="url(#rim4)" transform="rotate(-8 50.6 58)"/>
<ellipse cx="50.2" cy="58.6" rx="37.6" ry="42.4" fill="#44b02a" transform="rotate(-8 50.2 58.6)"/>
<path d="M13.5,54 C14,32 28,16.5 49,16 C66,15.5 80,22 86.5,35.5 C72,29 53,28.5 40,34 C28,39.5 19,51 14.5,68 C13.6,63 13.4,58.5 13.5,54 Z" fill="url(#hl4)"/>
<ellipse cx="28.5" cy="26" rx="8" ry="5" fill="url(#sp4)" transform="rotate(-35 28.5 26)"/>
<path d="M21,40 L21,0 M21.2,1.8 L1.8,28.4 M0.3,28.4 L29.4,28.4" transform="translate(37.30 39.70)" fill="none" stroke="#fff" stroke-width="4.1" stroke-linejoin="miter" stroke-linecap="butt"/>
</svg>
<svg style="left:1062.0px;top:822.0px" width="112" height="120" viewBox="0 0 112 120">
<defs><linearGradient id="hl5" x1="0.25" y1="0" x2="0.55" y2="1"><stop offset="0" stop-color="#ffffff" stop-opacity="0.8"/><stop offset="0.45" stop-color="#9ad886" stop-opacity="0.55"/><stop offset="1" stop-color="#44b02a" stop-opacity="0"/></linearGradient>
<linearGradient id="rim5" x1="0" y1="0" x2="1" y2="0.4"><stop offset="0" stop-color="#c9cfd1"/><stop offset="0.45" stop-color="#77838a"/><stop offset="1" stop-color="#333f48"/></linearGradient>
<radialGradient id="sp5" cx="0.5" cy="0.5" r="0.5"><stop offset="0" stop-color="#fff" stop-opacity="0.95"/><stop offset="1" stop-color="#fff" stop-opacity="0"/></radialGradient>
<filter id="sh5" x="-30%" y="-30%" width="160%" height="160%"><feGaussianBlur stdDeviation="2.4"/></filter></defs>
<ellipse cx="57" cy="61" rx="41" ry="46" fill="#000" opacity="0.4" filter="url(#sh5)" transform="rotate(-8 57 61)"/>
<ellipse cx="52.5" cy="56.5" rx="41" ry="46.2" fill="#333f48" transform="rotate(-8 52.5 56.5)"/>
<ellipse cx="50.6" cy="58" rx="38.6" ry="43.2" fill="url(#rim5)" transform="rotate(-8 50.6 58)"/>
<ellipse cx="50.2" cy="58.6" rx="37.6" ry="42.4" fill="#44b02a" transform="rotate(-8 50.2 58.6)"/>
<path d="M13.5,54 C14,32 28,16.5 49,16 C66,15.5 80,22 86.5,35.5 C72,29 53,28.5 40,34 C28,39.5 19,51 14.5,68 C13.6,63 13.4,58.5 13.5,54 Z" fill="url(#hl5)"/>
<ellipse cx="28.5" cy="26" rx="8" ry="5" fill="url(#sp5)" transform="rotate(-35 28.5 26)"/>
<path d="M26.2,2.1 L5.8,2.1 L3.2,19.6 C5.8,16.6 9.8,15.2 14.4,15.2 C22,15.2 27,20.2 27,26.8 C27,33.6 22,38.5 14.4,38.5 C7.8,38.5 3.2,35.2 1.6,30" transform="translate(37.85 39.70)" fill="none" stroke="#fff" stroke-width="4.1" stroke-linejoin="miter" stroke-linecap="butt"/>
</svg>
</div></body></html>
